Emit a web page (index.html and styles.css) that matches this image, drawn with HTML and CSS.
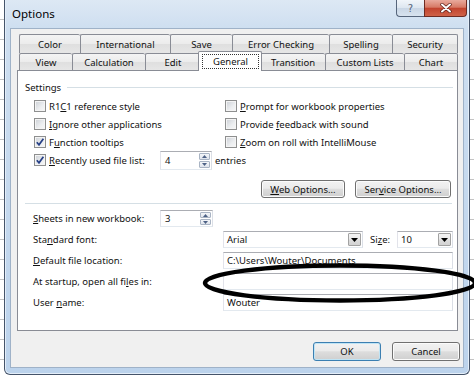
FILE: index.html
```html
<!DOCTYPE html>
<html>
<head>
<meta charset="utf-8">
<title>Options</title>
<link rel="stylesheet" href="styles.css">
</head>
<body>
<div class="window">
  <div class="titlebar">
    <span class="title">Options</span>
    <div class="caption">
      <div class="cap-btn help">?</div>
      <div class="cap-btn close">
        <svg width="12" height="10" viewBox="0 0 12 10"><path d="M2 1.5 L10 8.5 M10 1.5 L2 8.5" stroke="#5a1d16" stroke-width="3.4" stroke-linecap="round"/><path d="M2 1.5 L10 8.5 M10 1.5 L2 8.5" stroke="#fff" stroke-width="2" stroke-linecap="round"/></svg>
      </div>
    </div>
  </div>
  <div class="client">
    <div class="tabs">
      <div class="tabrow row-back">
        <div class="tab">Color</div>
        <div class="tab">International</div>
        <div class="tab">Save</div>
        <div class="tab">Error Checking</div>
        <div class="tab">Spelling</div>
        <div class="tab">Security</div>
      </div>
      <div class="tabrow row-front">
        <div class="tab">View</div>
        <div class="tab">Calculation</div>
        <div class="tab">Edit</div>
        <div class="tab selected"><span class="focus">General</span></div>
        <div class="tab">Transition</div>
        <div class="tab">Custom Lists</div>
        <div class="tab">Chart</div>
      </div>
    </div>
    <div class="panel">
      <div class="group-head"><span>Settings</span><div class="rule"></div></div>
      <div class="checks">
        <div class="chk"><span class="box"></span><span>R1<u>C</u>1 reference style</span></div>
        <div class="chk"><span class="box"></span><span><u>P</u>rompt for workbook properties</span></div>
        <div class="chk"><span class="box"></span><span><u>I</u>gnore other applications</span></div>
        <div class="chk"><span class="box"></span><span>Provide <u>f</u>eedback with sound</span></div>
        <div class="chk"><span class="box"><svg class="tick" width="10" height="10" viewBox="0 0 10 10"><path d="M1.8 5.2 L4 7.8 L8.4 1.8" fill="none" stroke="#263f86" stroke-width="1.7"/></svg></span><span>F<u>u</u>nction tooltips</span></div>
        <div class="chk"><span class="box"></span><span><u>Z</u>oom on roll with IntelliMouse</span></div>
        <div class="chk wide">
          <span class="box"><svg class="tick" width="10" height="10" viewBox="0 0 10 10"><path d="M1.8 5.2 L4 7.8 L8.4 1.8" fill="none" stroke="#263f86" stroke-width="1.7"/></svg></span>
          <span class="recent-label"><u>R</u>ecently used file list:</span>
          <div class="spin recent">
            <span class="val">4</span>
            <div class="spin-btns">
              <div class="sb"><svg width="5" height="3" viewBox="0 0 5 3"><path d="M0 3 L2.5 0 L5 3 Z" fill="#4d6185"/></svg></div>
              <div class="sb"><svg width="5" height="3" viewBox="0 0 5 3"><path d="M0 0 L2.5 3 L5 0 Z" fill="#4d6185"/></svg></div>
            </div>
          </div>
          <span>entries</span>
        </div>
      </div>
      <div class="panel-buttons">
        <div class="btn web"><span><u>W</u>eb Options...</span></div>
        <div class="btn svc"><span>Ser<u>v</u>ice Options...</span></div>
      </div>
      <div class="sep"></div>
      <div class="form">
        <span class="lbl"><u>S</u>heets in new workbook:</span>
        <div class="spin sheets">
          <span class="val">3</span>
          <div class="spin-btns">
            <div class="sb"><svg width="5" height="3" viewBox="0 0 5 3"><path d="M0 3 L2.5 0 L5 3 Z" fill="#4d6185"/></svg></div>
            <div class="sb"><svg width="5" height="3" viewBox="0 0 5 3"><path d="M0 0 L2.5 3 L5 0 Z" fill="#4d6185"/></svg></div>
          </div>
        </div>
        <span></span>

        <span class="lbl span2">Sta<u>n</u>dard font:</span>
        <div class="fontrow">
          <div class="field combo font"><span>Arial</span><div class="dd"><svg width="7" height="4" viewBox="0 0 7 4"><path d="M0 0 L7 0 L3.5 4 Z" fill="#000"/></svg></div></div>
          <span class="size-lbl">Si<u>z</u>e:</span>
          <div class="field combo size"><span>10</span><div class="dd"><svg width="7" height="4" viewBox="0 0 7 4"><path d="M0 0 L7 0 L3.5 4 Z" fill="#000"/></svg></div></div>
        </div>

        <span class="lbl span2"><u>D</u>efault file location:</span>
        <div class="field"><span>C:\Users\Wouter\Documents</span></div>

        <span class="lbl span2">At startup, open all fi<u>l</u>es in:</span>
        <div class="field"></div>

        <span class="lbl span2">User <u>n</u>ame:</span>
        <div class="field"><span>Wouter</span></div>
      </div>
    </div>
    <div class="footer">
      <div class="btn dlg ok">OK</div>
      <div class="btn dlg">Cancel</div>
    </div>
  </div>
</div>
<svg class="scribble" width="474" height="376" viewBox="0 0 474 376">
  <ellipse cx="340" cy="283" rx="135" ry="17.5" fill="none" stroke="#000" stroke-width="4.5"/>
</svg>
</body>
</html>
```

FILE: styles.css
```css
* { box-sizing: border-box; }

html, body { margin: 0; padding: 0; }

body {
  width: 474px;
  height: 376px;
  overflow: hidden;
  position: relative;
  font-family: "Noto Sans", "Liberation Sans", sans-serif;
  font-size: 9.5px;
  color: #111;
  background: #fff repeating-linear-gradient(to bottom, transparent 0, transparent 19px, #c4c4c4 19px, #c4c4c4 20px);
}

u { text-decoration: underline; text-underline-offset: 1px; }

.window {
  margin-left: 4px;
  width: 466px;
  height: 375px;
  border: 1px solid #45546a;
  border-top: 0;
  border-radius: 0 0 6px 6px;
  background: linear-gradient(to bottom, #dde8f4 0, #cddef0 30px, #bcd3ec 100%);
  box-shadow: inset 1px 0 0 #e4eef9, inset -1px 0 0 #e4eef9, inset 0 -1px 0 #e4eef9;
  padding: 0 5px 6px;
  display: flex;
  flex-direction: column;
}

.titlebar {
  height: 28px;
  flex: none;
  display: flex;
  justify-content: space-between;
  align-items: flex-start;
}

.title {
  font-size: 11.5px;
  line-height: 16px;
  padding: 6px 0 0 2px;
  color: #000;
}

.caption {
  display: flex;
  margin-right: -3px;
}

.cap-btn {
  height: 17px;
  border: 1px solid #56657b;
  border-top: 0;
  display: flex;
  align-items: center;
  justify-content: center;
}

.help {
  width: 28px;
  border-right: 0;
  border-radius: 0 0 0 4px;
  background: linear-gradient(to bottom, #f1f5fa 0, #dde6f0 50%, #c9d6e5 51%, #d8e3ef 100%);
  color: #55647a;
  font-size: 10px;
  font-family: "DejaVu Sans", sans-serif;
}

.close {
  width: 43px;
  border-color: #6e2b22;
  border-radius: 0 0 4px 0;
  background: linear-gradient(to bottom, #e9aa9d 0, #d77a66 45%, #c2442f 52%, #cf6248 100%);
}

.client {
  flex: 1;
  background: #f0f0f0;
  border: 1px solid #9fb2c8;
  display: flex;
  flex-direction: column;
}

.tabs {
  margin: 5px 0 0 8px;
  width: 439px;
  position: relative;
  z-index: 1;
}

.tabrow { display: grid; }

.row-back {
  grid-template-columns: 61px 90px 62px 97px 63px 66px;
  height: 19px;
}

.row-front {
  grid-template-columns: 53px 73px 55px 60px 65px 79px 54px;
  height: 17px;
}

.tab {
  border: 1px solid #898c95;
  border-bottom: 0;
  border-right: 0;
  border-radius: 2px 2px 0 0;
  background: linear-gradient(to bottom, #f4f4f4 0, #ececec 48%, #dfdfdf 52%, #e6e6e6 100%);
  display: flex;
  align-items: center;
  justify-content: center;
  white-space: nowrap;
  color: #111;
}

.tab:last-child { border-right: 1px solid #898c95; }

.tab.selected {
  background: #fff;
  margin: -2px -2px -1px -2px;
  border-right: 1px solid #898c95;
  position: relative;
  z-index: 2;
  padding: 2px 2px 2px 3px;
  align-items: stretch;
}

.focus {
  flex: 1;
  border: 1px dotted #333;
  display: flex;
  align-items: center;
  justify-content: center;
}

.panel {
  margin-left: 6px;
  width: 441px;
  height: 261px;
  flex: none;
  background: #fff;
  border: 1px solid #898c95;
  display: flex;
  flex-direction: column;
}

.group-head {
  display: flex;
  align-items: center;
  height: 14px;
  margin: 9px 4px 0 7px;
  gap: 6px;
}

.rule {
  flex: 1;
  height: 1px;
  background: #d5dfe5;
}

.checks {
  display: grid;
  grid-template-columns: 191px 1fr;
  grid-auto-rows: 18px;
  margin: 3px 0 0 16px;
}

.chk {
  display: flex;
  align-items: center;
  gap: 3px;
  white-space: nowrap;
}

.chk.wide { grid-column: 1 / -1; }

.box {
  width: 12px;
  height: 12px;
  flex: none;
  border: 1px solid #8e8f8f;
  background: linear-gradient(135deg, #cbcfd5 0, #eceef0 60%, #f7f7f7 100%);
  box-shadow: inset 0 0 0 1px #f4f4f4;
  display: flex;
  align-items: center;
  justify-content: center;
}

.recent-label { width: 108px; }

.spin {
  background: #fff;
  border: 1px solid #abadb3;
  border-color: #abadb3 #dbdfe6 #e3e9ef #e2e3ea;
  display: flex;
  align-items: center;
}

.spin.recent { width: 52px; height: 19px; }
.spin.sheets { width: 53px; height: 17px; }

.val { padding-left: 4px; }

.spin-btns {
  margin-left: auto;
  width: 12px;
  height: 100%;
  display: flex;
  flex-direction: column;
  gap: 1px;
  padding: 1px 1px 1px 0;
}

.sb {
  flex: 1;
  border: 1px solid #a9b4c4;
  border-radius: 1px;
  background: linear-gradient(to bottom, #f4f6f9, #dfe4ec);
  display: flex;
  align-items: center;
  justify-content: center;
}

.panel-buttons {
  display: flex;
  justify-content: flex-end;
  gap: 10px;
  margin: 11px 6px 0 0;
}

.btn {
  height: 18px;
  border: 1px solid #707070;
  border-radius: 3px;
  background: linear-gradient(to bottom, #f2f2f2 0, #ebebeb 45%, #dddddd 52%, #cfcfcf 100%);
  box-shadow: inset 0 0 0 1px #fbfbfb;
  display: flex;
  align-items: center;
  justify-content: center;
  white-space: nowrap;
  color: #111;
}

.btn.web { width: 84px; }
.btn.svc { width: 96px; }

.sep {
  height: 1px;
  background: #d5dfe5;
  margin: 5px 5px 0 7px;
}

.form {
  display: grid;
  grid-template-columns: 127px 63px 1fr;
  grid-auto-rows: 21px;
  align-items: center;
  margin: 4px 4px 0 15px;
}

.lbl { white-space: nowrap; }
.span2 { grid-column: 1 / 3; }

.field {
  height: 17px;
  background: #fff;
  border: 1px solid #abadb3;
  border-color: #abadb3 #dbdfe6 #e3e9ef #e2e3ea;
  padding-left: 3px;
  display: flex;
  align-items: center;
  white-space: nowrap;
}

.fontrow {
  display: flex;
  align-items: center;
}

.combo { padding-right: 1px; }
.combo.font { width: 140px; }
.combo.size { flex: 1; }

.size-lbl { margin-left: 7px; width: 27px; }

.dd {
  margin-left: auto;
  width: 13px;
  height: 13px;
  border: 1px solid #a2a2a2;
  border-radius: 1px;
  background: linear-gradient(to bottom, #f4f4f4 0, #ebebeb 48%, #dcdcdc 52%, #d3d3d3 100%);
  display: flex;
  align-items: center;
  justify-content: center;
}

.footer {
  display: flex;
  justify-content: flex-end;
  gap: 11px;
  margin: 11px 3px 0 0;
}

.btn.dlg { width: 68px; height: 19px; }

.btn.ok {
  border-color: #3c7fb1;
  box-shadow: inset 0 0 0 1px #bfe4f5;
}

.scribble {
  position: absolute;
  left: 0;
  top: 0;
  pointer-events: none;
}
```
